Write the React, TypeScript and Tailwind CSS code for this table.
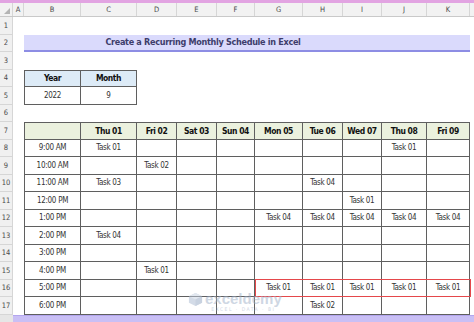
import React from "react";

const GRID =
  "grid grid-cols-[13px_11px_57px_56px_40px_40px_38px_48px_40px_39px_45px_43px_4px]";

const B = "border-[#5f5f5f]";
const BODY = "text-[8px] tracking-[-0.3px] text-[#333]";
const HEAD = "font-bold text-[8.5px] tracking-[-0.45px] text-[#111]";

function Row({
  n,
  h,
  children,
  className = "",
}: {
  n: number;
  h: number;
  children: React.ReactNode;
  className?: string;
}) {
  return (
    <div className={`${GRID} ${h === 18 ? "h-[18px]" : "h-[17px]"} ${className}`}>
      <div className="bg-[#f0f0f0] border-r border-b border-[#d6d6d6] text-[7.5px] text-[#4a4a4a] flex items-center justify-center">
        {n}
      </div>
      {children}
    </div>
  );
}

const days = ["Thu 01", "Fri 02", "Sat 03", "Sun 04", "Mon 05", "Tue 06", "Wed 07", "Thu 08", "Fri 09"];

const times = [
  "9:00 AM",
  "10:00 AM",
  "11:00 AM",
  "12:00 PM",
  "1:00 PM",
  "2:00 PM",
  "3:00 PM",
  "4:00 PM",
  "5:00 PM",
  "6:00 PM",
];

const tasks: Record<number, Record<number, string>> = {
  0: { 0: "Task 01", 7: "Task 01" },
  1: { 1: "Task 02" },
  2: { 0: "Task 03", 5: "Task 04" },
  3: { 6: "Task 01" },
  4: { 4: "Task 04", 5: "Task 04", 6: "Task 04", 7: "Task 04", 8: "Task 04" },
  5: { 0: "Task 04" },
  6: {},
  7: { 1: "Task 01" },
  8: { 4: "Task 01", 5: "Task 01", 6: "Task 01", 7: "Task 01", 8: "Task 01" },
  9: { 5: "Task 02" },
};

const heights = [18, 17, 18, 17, 18, 17, 18, 17, 18, 17, 18, 17, 18, 17, 18, 17, 18];

const letters = ["A", "B", "C", "D", "E", "F", "G", "H", "I", "J", "K"];

export default function App() {
  return (
    <div className="w-[474px] h-[322px] bg-white overflow-hidden relative font-['Liberation_Sans_Narrow','DejaVu_Sans_Condensed',Roboto,sans-serif]">
      {/* top accent */}
      <div className="h-[3px] bg-[#e2a4e2]" />
      {/* column header */}
      <div className={`${GRID} h-[14px] bg-[#f2f2f2] border-b border-[#c9c9c9]`}>
        <div className="relative border-r border-[#d6d6d6]">
          <div className="absolute right-[2px] bottom-[2px] w-0 h-0 border-l-[6px] border-l-transparent border-b-[6px] border-b-[#b4b4b4]" />
        </div>
        {letters.map((l) => (
          <div
            key={l}
            className="border-r border-[#d6d6d6] text-[7.5px] text-[#4a4a4a] flex items-center justify-center"
          >
            {l}
          </div>
        ))}
        <div />
      </div>

      {/* row 1 */}
      <Row n={1} h={heights[0]}>
        <div className="col-span-12" />
      </Row>
      {/* row 2: title */}
      <Row n={2} h={heights[1]}>
        <div />
        <div className="col-span-10 bg-[#dadafc] border-b-2 border-[#8d8de4] flex items-center">
          <div className="w-[358px] text-center font-bold text-[9px] tracking-[-0.3px] text-[#3d3d6b]">
            Create a Recurring Monthly Schedule in Excel
          </div>
        </div>
        <div />
      </Row>
      {/* row 3 */}
      <Row n={3} h={heights[2]}>
        <div className="col-span-12" />
      </Row>
      {/* row 4 */}
      <Row n={4} h={heights[3]}>
        <div />
        <div className={`bg-[#ddebf7] border ${B} flex items-center justify-center ${HEAD}`}>Year</div>
        <div className={`bg-[#ddebf7] border-t border-r border-b ${B} flex items-center justify-center ${HEAD}`}>
          Month
        </div>
        <div className="col-span-9" />
      </Row>
      {/* row 5 */}
      <Row n={5} h={heights[4]}>
        <div />
        <div className={`border-l border-r border-b ${B} flex items-center justify-center ${BODY}`}>2022</div>
        <div className={`border-r border-b ${B} flex items-center justify-center ${BODY}`}>9</div>
        <div className="col-span-9" />
      </Row>
      {/* row 6 */}
      <Row n={6} h={heights[5]}>
        <div className="col-span-12" />
      </Row>
      {/* row 7: header */}
      <Row n={7} h={heights[6]}>
        <div />
        <div className={`bg-[#ebf1de] border ${B}`} />
        {days.map((d) => (
          <div
            key={d}
            className={`bg-[#ebf1de] border-t border-r border-b ${B} flex items-center justify-center ${HEAD}`}
          >
            {d}
          </div>
        ))}
        <div />
      </Row>
      {/* rows 8-17 */}
      {times.map((t, i) => (
        <Row key={t} n={8 + i} h={heights[7 + i]} className={i === 8 ? "relative" : ""}>
          <div />
          <div className={`border-l border-r border-b ${B} flex items-center justify-center ${BODY}`}>{t}</div>
          {days.map((d, j) => (
            <div key={d} className={`border-r border-b ${B} flex items-center justify-center ${BODY}`}>
              {tasks[i][j] ?? ""}
            </div>
          ))}
          <div />
          {i === 8 && (
            <div className="absolute left-[255px] top-[-1px] w-[216px] h-[18px] border-[1.5px] border-[#e5484b] pointer-events-none" />
          )}
        </Row>
      ))}

      {/* bottom strip */}
      <div className="grid grid-cols-[13px_1fr] h-[7px]">
        <div className="bg-[#e6e6e6]" />
        <div className="bg-[#c9bff5] border-t border-[#b3a6ee]" />
      </div>

      {/* watermark */}
      <div className="absolute left-[188px] top-[291px] flex items-start gap-[2px] opacity-50 pointer-events-none">
        <svg width="15" height="15" viewBox="0 0 16 16" className="mt-[1px]">
          <polygon points="8,1 15,4.5 15,11.5 8,15 1,11.5 1,4.5" fill="#a9b9d0" />
          <polygon points="8,1 15,4.5 8,8 1,4.5" fill="#c6d2e2" />
          <polygon points="8,8 15,4.5 15,11.5 8,15" fill="#93a6c2" />
        </svg>
        <div className="flex flex-col items-center leading-none">
          <span className="font-['Liberation_Sans',Arial,sans-serif] font-bold text-[15px] text-[#9fb0c8]">
            exceldemy
          </span>
          <span className="text-[5px] tracking-[1.5px] text-[#9fb0c8] mt-[1px]">EXCEL · DATA · BI</span>
        </div>
      </div>
    </div>
  );
}
